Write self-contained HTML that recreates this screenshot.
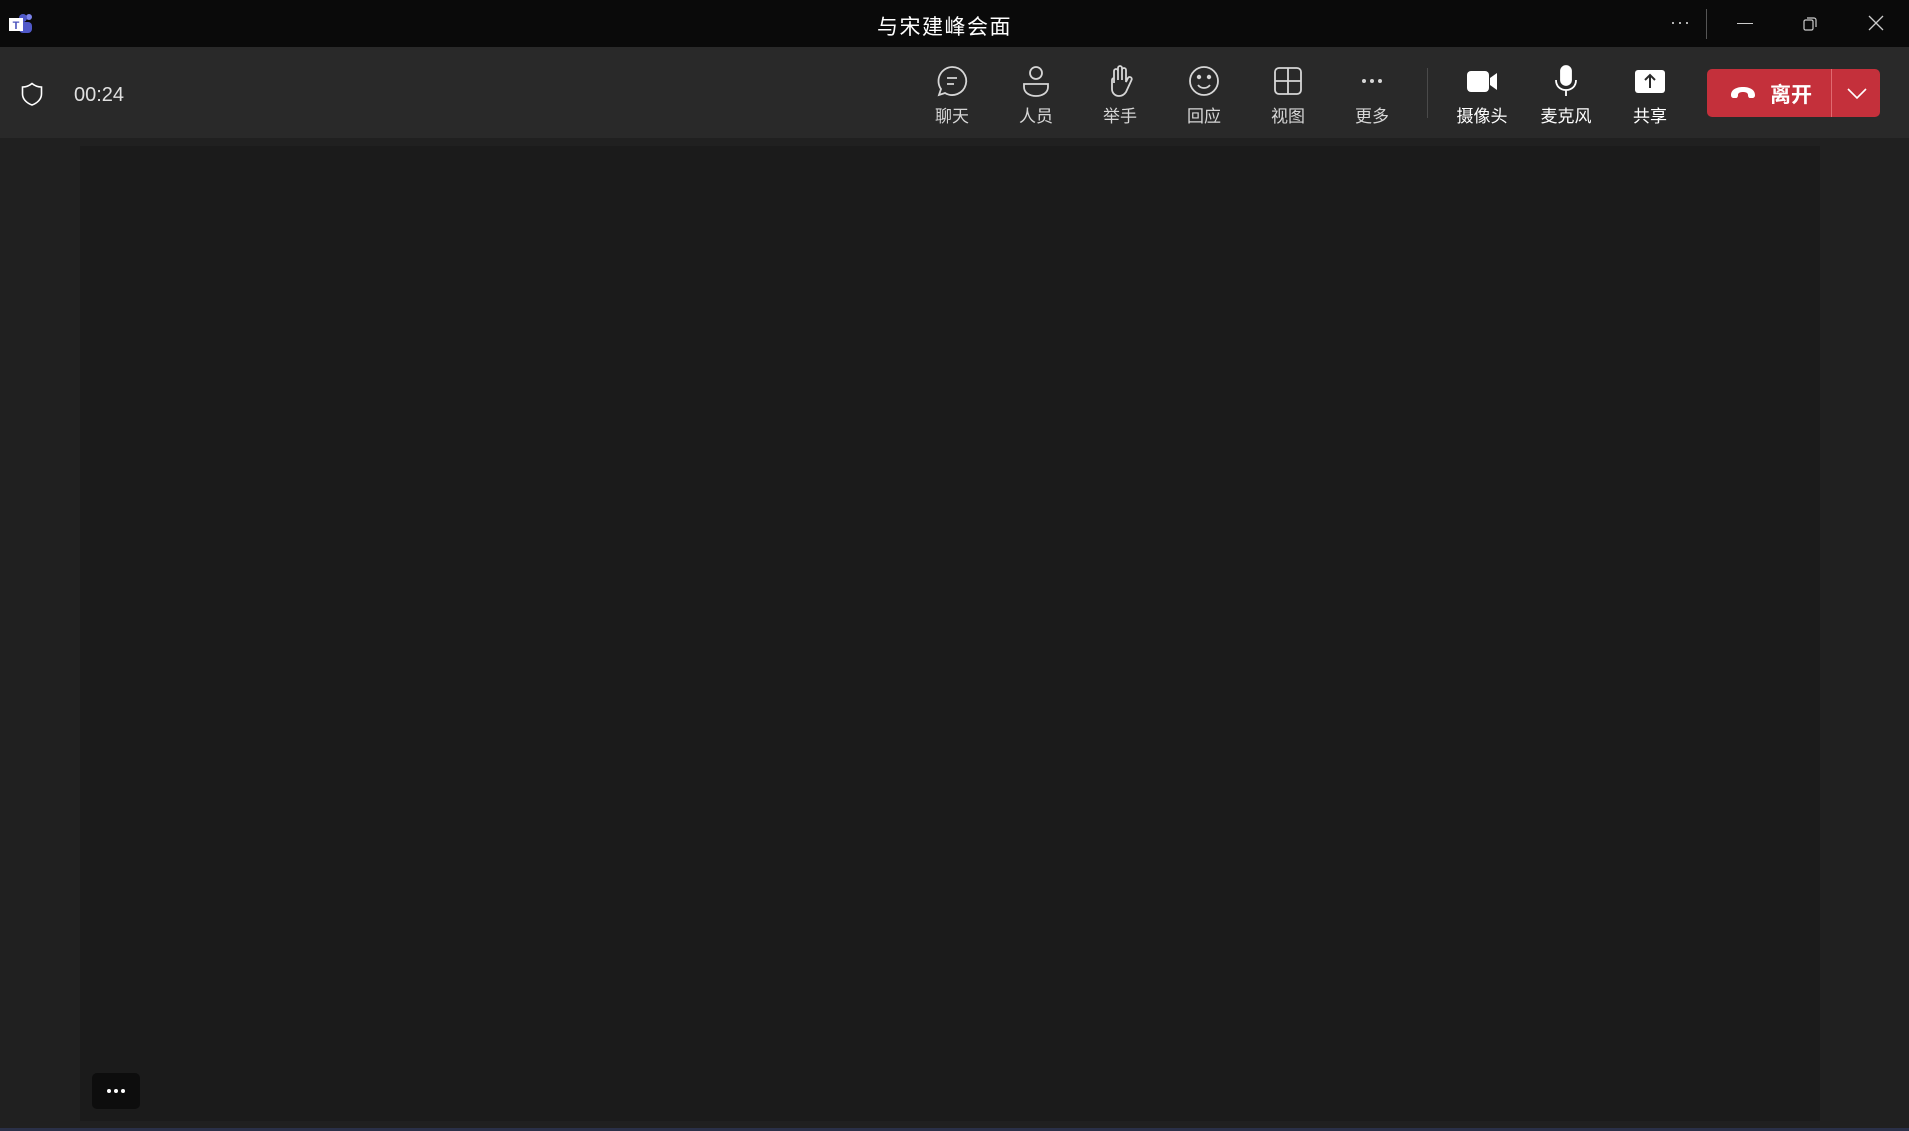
<!DOCTYPE html>
<html><head><meta charset="utf-8"><style>
*{margin:0;padding:0;box-sizing:border-box}
body{width:1909px;height:1131px;background:#202020;position:relative;overflow:hidden;font-family:"Liberation Sans","Noto Sans CJK SC",sans-serif;color:#fff}
.title{position:absolute;left:0;top:0;width:1909px;height:47px;background:#0a0a0a}
.tb{position:absolute;left:0;top:47px;width:1909px;height:91px;background:#292929}
.stage{position:absolute;left:80px;top:146px;width:1740px;height:975px;background:#1b1b1b}
.bottom{position:absolute;left:0;top:1128px;width:1909px;height:3px;background:#2a3048}
.it{position:absolute;top:63px;width:80px;text-align:center}
.it svg{display:block;margin:0 auto;height:36px}
.it span{display:block;font-size:17px;color:#d6d6d6;margin-top:7px;line-height:22px}
.it.b span{color:#fff}
</style></head><body>
<div class="title">
<svg style="position:absolute;left:8px;top:13px" width="26" height="22" viewBox="0 0 26 22"><circle cx="21" cy="4" r="3" fill="#7b83eb"/><circle cx="15" cy="5" r="4" fill="#5059c9"/><rect x="11" y="9" width="13" height="11" rx="4" fill="#5059c9"/><rect x="1" y="5" width="14" height="13" fill="#fff"/><text x="8" y="16" font-size="11" text-anchor="middle" fill="#4b53bc" font-family="Liberation Sans" font-weight="bold">T</text></svg>
<div style="position:absolute;left:0;width:1889px;top:11px;text-align:center;font-size:21px;color:#fff;letter-spacing:1.5px">与宋建峰会面</div>
<div style="position:absolute;left:1670px;top:12px;font-size:18px;color:#ccc;letter-spacing:1px">···</div>
<div style="position:absolute;left:1706px;top:9px;width:1px;height:30px;background:#555"></div>
<div style="position:absolute;left:1737px;top:23px;width:16px;height:1px;background:#ccc"></div>
<svg style="position:absolute;left:1803px;top:16px" width="15" height="15" viewBox="0 0 15 15" fill="none" stroke="#ccc" stroke-width="1.2"><rect x="1" y="4" width="9" height="10" rx="1.5"/><path d="M4 2h7a2 2 0 0 1 2 2v7"/></svg>
<svg style="position:absolute;left:1868px;top:15px" width="16" height="16" viewBox="0 0 16 16" stroke="#ccc" stroke-width="1.3"><path d="M1 1L15 15M15 1L1 15"/></svg>
</div>
<div class="tb">
<svg style="position:absolute;left:21px;top:35px" width="22" height="24" viewBox="0 0 22 24" fill="none" stroke="#fff" stroke-width="1.6"><path d="M11 1.5C8 4 5 5 1.5 5v7c0 5 4 9 9.5 11 5.5-2 9.5-6 9.5-11V5C17 5 14 4 11 1.5z"/></svg>
<div style="position:absolute;left:74px;top:37px;font-size:20px;color:#e0e0e0">00:24</div>
</div>
<div class="it" style="left:912px"><svg viewBox="0 0 36 36" width="36" fill="none" stroke="#d6d6d6" stroke-width="1.8"><path d="M18 4a14 14 0 1 1-7 26l-6 2 2-6A14 14 0 0 1 18 4z"/><path d="M13 15h10M13 21h7"/></svg><span>聊天</span></div>
<div class="it" style="left:996px"><svg viewBox="0 0 36 36" width="36" fill="none" stroke="#d6d6d6" stroke-width="1.8"><circle cx="18" cy="10" r="6"/><path d="M6 21h24v3c0 6-6 9-12 9S6 30 6 24z"/></svg><span>人员</span></div>
<div class="it" style="left:1080px"><svg viewBox="0 0 36 36" width="36" fill="none" stroke="#d6d6d6" stroke-width="1.8"><path d="M12 20V8a2 2 0 0 1 4 0v9V5a2 2 0 0 1 4 0v12V7a2 2 0 0 1 4 0v12l2-4a2 2 0 0 1 3.5 2L24 29c-2 3-4 4-7 4-4 0-7-3-7-7v-9a2 2 0 0 1 2-2"/></svg><span>举手</span></div>
<div class="it" style="left:1164px"><svg viewBox="0 0 36 36" width="36" fill="none" stroke="#d6d6d6" stroke-width="1.8"><circle cx="18" cy="18" r="14"/><circle cx="13" cy="14" r="1.3" fill="#d6d6d6"/><circle cx="23" cy="14" r="1.3" fill="#d6d6d6"/><path d="M12 22c3 4 9 4 12 0"/></svg><span>回应</span></div>
<div class="it" style="left:1248px"><svg viewBox="0 0 36 36" width="36" fill="none" stroke="#d6d6d6" stroke-width="1.8"><rect x="5" y="5" width="26" height="26" rx="4"/><path d="M18 5v26M5 18h26"/></svg><span>视图</span></div>
<div class="it" style="left:1332px"><svg viewBox="0 0 36 36" width="36" fill="#d6d6d6"><circle cx="10" cy="18" r="2"/><circle cx="18" cy="18" r="2"/><circle cx="26" cy="18" r="2"/></svg><span>更多</span></div>
<div style="position:absolute;left:1427px;top:68px;width:1px;height:50px;background:#4a4a4a"></div>
<div class="it b" style="left:1442px"><svg viewBox="0 0 36 36" width="36" fill="#fff"><rect x="3" y="8" width="22" height="21" rx="4"/><path d="M26 15l7-5v17l-7-5z"/></svg><span>摄像头</span></div>
<div class="it b" style="left:1526px"><svg viewBox="0 0 36 36" width="36" fill="none" stroke="#fff" stroke-width="1.8"><rect x="13" y="3" width="10" height="19" rx="5" fill="#fff"/><path d="M8 17c0 6 4 10 10 10s10-4 10-10M18 27v6"/></svg><span>麦克风</span></div>
<div class="it b" style="left:1610px"><svg viewBox="0 0 36 36" width="36"><rect x="3" y="7" width="30" height="23" rx="3" fill="#fff"/><path d="M18 25V12M13 17l5-5 5 5" stroke="#292929" stroke-width="2" fill="none"/></svg><span>共享</span></div>
<div style="position:absolute;left:1707px;top:69px;width:173px;height:48px;background:#c4303b;border-radius:5px">
<svg style="position:absolute;left:22px;top:15px" width="28" height="16" viewBox="0 0 28 16"><path d="M2 11c0-5 5-8 12-8s12 3 12 8c0 2-1 3-3 3h-2c-1 0-2-1-2-3 0-2-2-3-5-3s-5 1-5 3c0 2-1 3-2 3H5c-2 0-3-1-3-3z" fill="#fff"/></svg>
<div style="position:absolute;left:63px;top:10px;font-size:21px;font-weight:bold">离开</div>
<div style="position:absolute;left:124px;top:0;width:1px;height:48px;background:#e06a70"></div>
<svg style="position:absolute;left:140px;top:19px" width="20" height="12" viewBox="0 0 20 12" fill="none" stroke="#fff" stroke-width="1.6"><path d="M1 1l9 9 9-9"/></svg>
</div>
<div class="stage"></div>
<div style="position:absolute;left:92px;top:1073px;width:48px;height:36px;background:#0d0d0d;border-radius:5px">
<svg style="position:absolute;left:14px;top:15px" width="20" height="6" viewBox="0 0 20 6" fill="#fff"><circle cx="3" cy="3" r="2"/><circle cx="10" cy="3" r="2"/><circle cx="17" cy="3" r="2"/></svg>
</div>
<div class="bottom"></div>
</body></html>
